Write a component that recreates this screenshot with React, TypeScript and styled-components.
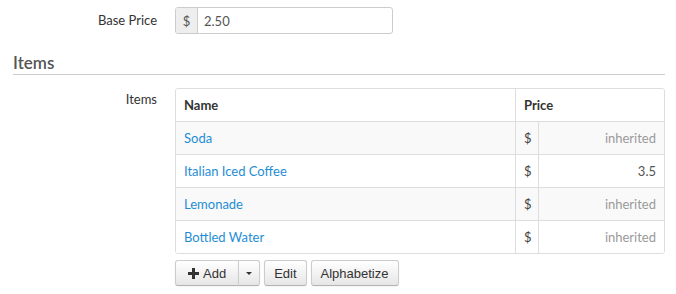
import React from 'react';
import styled, { createGlobalStyle } from 'styled-components';

const GlobalStyle = createGlobalStyle`
  body {
    margin: 0;
    background: #fff;
    font-family: Lato, "Open Sans", sans-serif;
    font-size: 13px;
    color: #333;
  }
`;

type Item = { name: string; price?: string };

const ITEMS: Item[] = [
  { name: 'Soda' },
  { name: 'Italian Iced Coffee', price: '3.5' },
  { name: 'Lemonade' },
  { name: 'Bottled Water' },
];

const Page = styled.div`
  width: 676px;
  height: 294px;
  padding: 7px 11px 0 13px;
  box-sizing: border-box;
  overflow: hidden;
`;

const FormRow = styled.div`
  display: grid;
  grid-template-columns: 144px 1fr;
  column-gap: 18px;
  align-items: start;
`;

const Label = styled.label<{ $top?: number }>`
  text-align: right;
  font-size: 13px;
  color: #333;
  padding-top: ${({ $top }) => $top ?? 6}px;
  line-height: 15px;
`;

const InputGroup = styled.div`
  display: flex;
  width: 218px;
  height: 27px;
  border: 1px solid #ccc;
  border-radius: 3px;
  box-sizing: border-box;
  overflow: hidden;
`;

const Addon = styled.span`
  width: 21px;
  background: #eee;
  border-right: 1px solid #ccc;
  display: flex;
  align-items: center;
  justify-content: center;
  font-size: 13px;
  color: #555;
`;

const TextInput = styled.div`
  flex: 1;
  display: flex;
  align-items: center;
  padding-left: 6px;
  font-size: 13px;
  color: #555;
`;

const SectionTitle = styled.h3`
  margin: 19px 0 13px;
  padding-bottom: 1px;
  border-bottom: 1px solid #ccc;
  font-size: 17px;
  font-weight: 600;
  color: #555;
  line-height: 20px;
`;

const Table = styled.div`
  width: 490px;
  border: 1px solid #ddd;
  border-radius: 3px;
  box-sizing: border-box;
  overflow: hidden;
`;

const Row = styled.div<{ $striped?: boolean; $head?: boolean }>`
  display: grid;
  grid-template-columns: 339px 23px 1fr;
  height: ${({ $head }) => ($head ? 32 : 33)}px;
  background: ${({ $striped }) => ($striped ? '#f9f9f9' : '#fff')};
  border-top: ${({ $head }) => ($head ? 'none' : '1px solid #ddd')};
  box-sizing: border-box;
`;

const Cell = styled.div<{ $right?: boolean; $border?: boolean; $span?: number; $muted?: boolean }>`
  display: flex;
  align-items: center;
  justify-content: ${({ $right }) => ($right ? 'flex-end' : 'flex-start')};
  padding: 0 8px;
  border-left: ${({ $border }) => ($border ? '1px solid #ddd' : 'none')};
  grid-column: ${({ $span }) => ($span ? `span ${$span}` : 'auto')};
  color: ${({ $muted }) => ($muted ? '#999' : '#555')};
  font-size: 13px;
`;

const HeadCell = styled(Cell)`
  font-weight: 700;
  color: #333;
`;

const NameLink = styled.a`
  color: #1f8dd6;
  text-decoration: none;
`;

const Dollar = styled(Cell)`
  padding: 0 0 0 8px;
  color: #444;
`;

const Toolbar = styled.div`
  display: flex;
  gap: 4px;
  margin-top: 6px;
`;

const Button = styled.button<{ $split?: 'left' | 'right' }>`
  height: 26px;
  padding: 0 ${({ $split }) => ($split === 'right' ? '7px' : $split === 'left' ? '12px' : '9px')};
  font-family: "Liberation Sans", Arial, sans-serif;
  font-size: 13px;
  color: #333;
  background: linear-gradient(#fff, #e6e6e6);
  border: 1px solid #ccc;
  border-bottom-color: #b3b3b3;
  border-radius: ${({ $split }) =>
    $split === 'left' ? '3px 0 0 3px' : $split === 'right' ? '0 3px 3px 0' : '3px'};
  margin-left: ${({ $split }) => ($split === 'right' ? '-1px' : '0')};
  display: flex;
  align-items: center;
  gap: 4px;
  box-shadow: inset 0 1px 0 rgba(255, 255, 255, 0.2), 0 1px 2px rgba(0, 0, 0, 0.05);
  cursor: pointer;
`;

const SplitGroup = styled.div`
  display: flex;
`;

const Caret = styled.span`
  width: 0;
  height: 0;
  border-left: 3px solid transparent;
  border-right: 3px solid transparent;
  border-top: 3px solid #333;
`;

const PlusIcon = () => (
  <svg width="11" height="11" viewBox="0 0 11 11">
    <path d="M4 0h3v4h4v3H7v4H4V7H0V4h4z" fill="#333" />
  </svg>
);

export default function App() {
  return (
    <>
      <GlobalStyle />
      <Page>
        <FormRow>
          <Label>Base Price</Label>
          <InputGroup>
            <Addon>$</Addon>
            <TextInput>2.50</TextInput>
          </InputGroup>
        </FormRow>

        <SectionTitle>Items</SectionTitle>

        <FormRow>
          <Label $top={4}>Items</Label>
          <div>
            <Table>
              <Row $head>
                <HeadCell>Name</HeadCell>
                <HeadCell $border $span={2}>Price</HeadCell>
              </Row>
              {ITEMS.map((item, i) => (
                <Row key={item.name} $striped={i % 2 === 0}>
                  <Cell>
                    <NameLink href="#">{item.name}</NameLink>
                  </Cell>
                  <Dollar $border>$</Dollar>
                  <Cell $border $right $muted={!item.price}>
                    {item.price ?? 'inherited'}
                  </Cell>
                </Row>
              ))}
            </Table>
            <Toolbar>
              <SplitGroup>
                <Button $split="left">
                  <PlusIcon />
                  Add
                </Button>
                <Button $split="right">
                  <Caret />
                </Button>
              </SplitGroup>
              <Button>Edit</Button>
              <Button>Alphabetize</Button>
            </Toolbar>
          </div>
        </FormRow>
      </Page>
    </>
  );
}
